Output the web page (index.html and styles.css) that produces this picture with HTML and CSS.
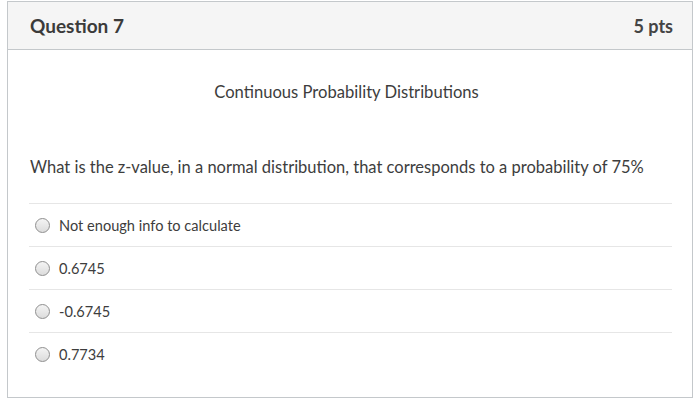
FILE: index.html
```html
<!DOCTYPE html>
<html>
<head>
<meta charset="utf-8">
<link rel="stylesheet" href="styles.css">
</head>
<body>
<div class="question">
  <div class="q-header">
    <h2 class="q-title">Question 7</h2>
    <div class="q-points">5 pts</div>
  </div>
  <div class="q-body">
    <p class="q-topic">Continuous Probability Distributions</p>
    <p class="q-text">What is the z-value, in a normal distribution, that corresponds to a probability of 75%</p>
    <div class="answers">
      <label class="answer"><span class="radio"></span><span class="answer-text">Not enough info to calculate</span></label>
      <label class="answer"><span class="radio"></span><span class="answer-text">0.6745</span></label>
      <label class="answer"><span class="radio"></span><span class="answer-text">-0.6745</span></label>
      <label class="answer"><span class="radio"></span><span class="answer-text">0.7734</span></label>
    </div>
  </div>
</div>
</body>
</html>
```
FILE: styles.css
```css
* { box-sizing: border-box; }
html, body { margin: 0; padding: 0; background: #fff; }
body {
  font-family: Lato, "Open Sans", sans-serif;
  color: #3d3d3d;
  padding: 1px 0 0 7px;
}
.question {
  width: 686px;
  height: 397px;
  border: 1px solid #c4c8cb;
  background: #fff;
}
.q-header {
  height: 48px;
  background: #f5f5f5;
  border-bottom: 1px solid #c4c8cb;
  display: flex;
  align-items: center;
  justify-content: space-between;
  padding: 0 19px 0 22px;
}
.q-title {
  margin: 0;
  font-size: 19px;
  font-weight: 700;
  color: #3b3b3b;
}
.q-points {
  font-size: 18px;
  font-weight: 700;
  color: #444;
}
.q-body {
  padding: 0 20px 0 21px;
}
.q-topic {
  margin: 32px 0 0;
  padding-right: 8px;
  text-align: center;
  font-size: 16.6px;
  line-height: 20px;
}
.q-text {
  margin: 54px 0 0 1px;
  font-size: 16.5px;
  line-height: 22px;
}
.answers {
  margin-top: 25px;
}
.answer {
  display: flex;
  align-items: center;
  height: 43px;
  border-top: 1px solid #e6e6e6;
  padding-left: 6px;
  font-size: 14.6px;
}
.radio {
  width: 15px;
  height: 15px;
  border-radius: 50%;
  border: 1px solid #8f8f8f;
  background: linear-gradient(#f4f4f4, #dcdcdc);
  margin-right: 9px;
  flex: none;
}
.answer-text { color: #3d3d3d; }
```
